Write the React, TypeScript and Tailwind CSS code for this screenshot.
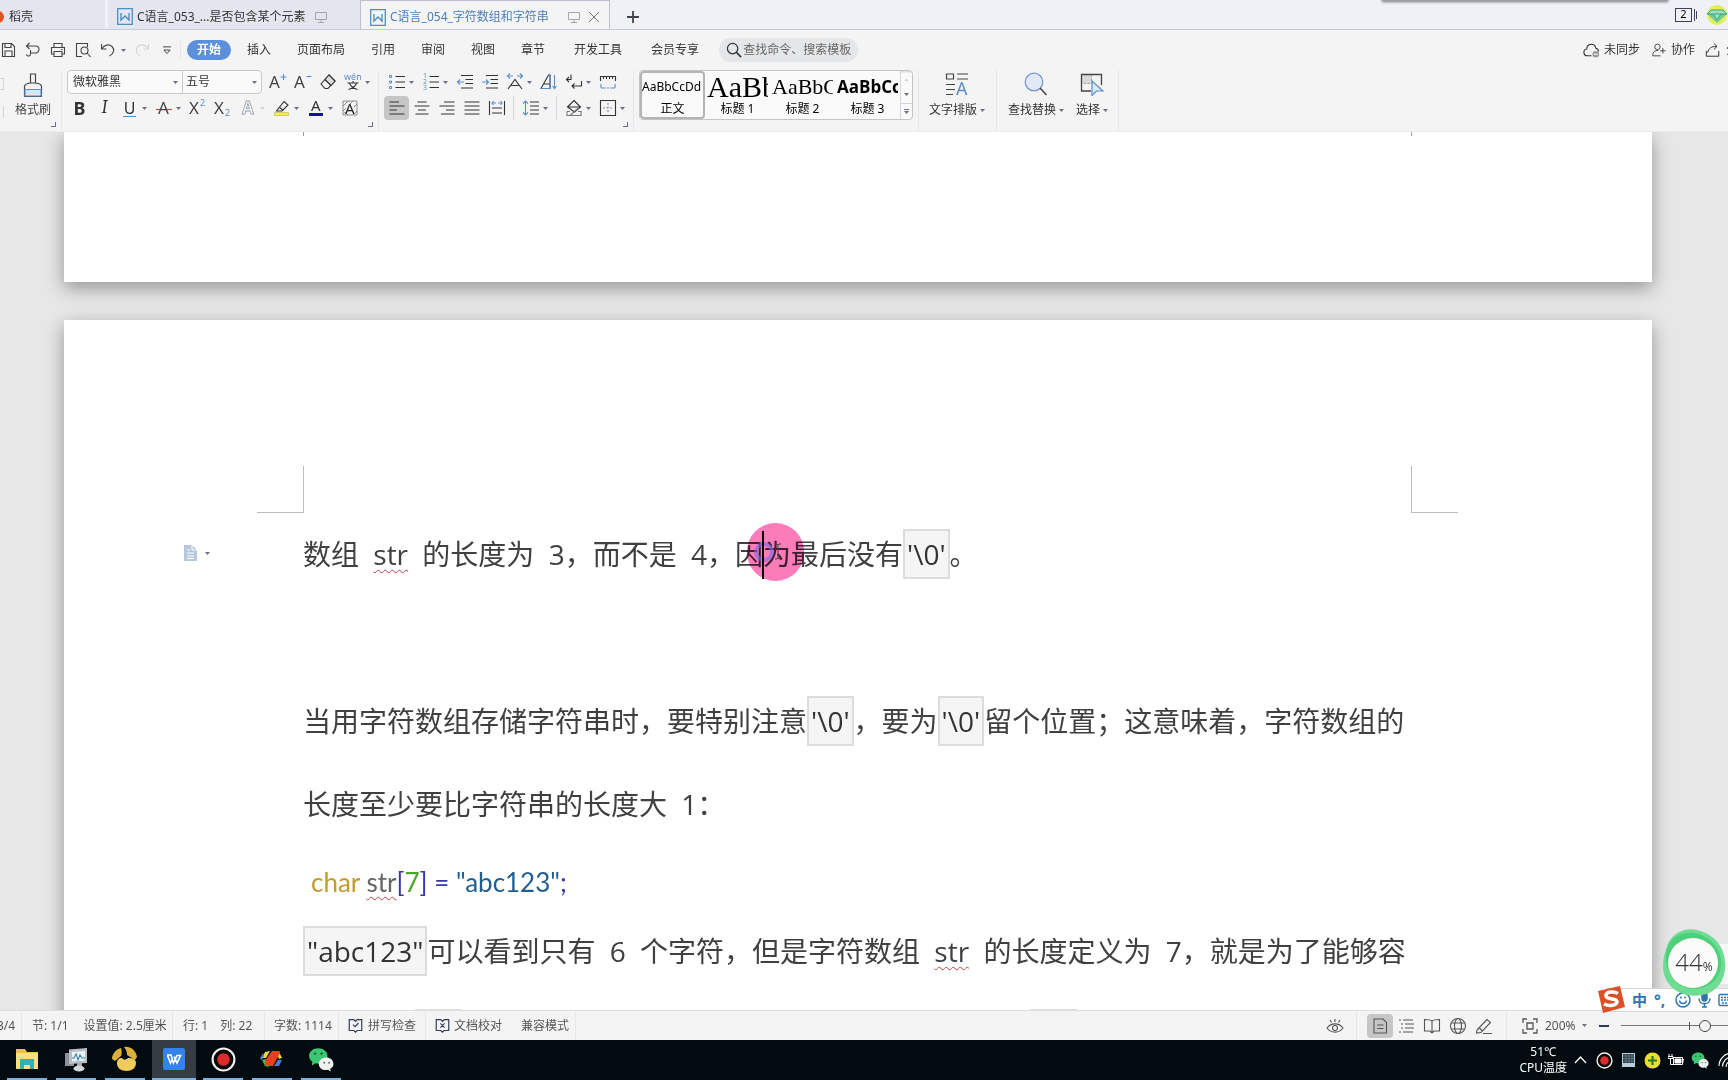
import type { ReactNode } from "react";
import clsx from "clsx";

type IconProps = { size?: number; className?: string; children: ReactNode };

function Icon({ size = 18, className, children }: IconProps) {
  return (
    <svg
      width={size}
      height={size}
      viewBox="0 0 18 18"
      fill="none"
      stroke="currentColor"
      strokeWidth="1.1"
      className={clsx("shrink-0 overflow-visible", className)}
      aria-hidden="true"
    >
      {children}
    </svg>
  );
}

function Caret({ light }: { light?: boolean }) {
  return (
    <svg width="5" height="3" viewBox="0 0 5 3" className={clsx("shrink-0", light ? "text-gray-300" : "text-gray-500")} aria-hidden="true">
      <path d="M0 0h5L2.5 3z" fill="currentColor" />
    </svg>
  );
}

const BLUE = "#5b8fc9";

const icons = {
  save: <Icon><path d="M3.5 2.5h9l3 3v10h-12zM6 2.5v4h6v-4M6 15.500v-5.500h7v5.500" /></Icon>,
  exportPdf: <Icon><path d="M2.500 5h9a3.500 3.500 0 0 1 0 7H6.500M5.500 2 2.500 5l3 3M6.500 9v3.500a2 2 0 0 1-4 1" /></Icon>,
  print: <Icon><path d="M5 6V2.500h8V6M5 13H2.500V6.500h13V13H13M5 10.500h8v5H5zM12 8.500h1.500" /></Icon>,
  preview: <Icon><path d="M8 15.500H2.500v-13h11V6" /><circle cx="10.500" cy="9.500" r="3.500" /><path d="m13 12 3.500 4" /></Icon>,
  undo: <Icon><path d="M2.500 3v5h5M2.500 8C5 4 10 2.500 13 5.500s2 7-2.500 9.500" /></Icon>,
  redo: <Icon className="text-gray-300"><path d="M15.500 3v5h-5M15.500 8C13 4 8 2.500 5 5.500s-2 7 2.500 9.500" /></Icon>,
  more: <Icon size={16}><path d="M4.500 5.500h9M5.500 9 9 13l3.500-4z" /></Icon>,
  fontUp: <Icon><text x="0" y="15" fontSize="17" fill="#444" stroke="none">A</text><path d="M14.500 1v6M11.500 4h6" stroke={BLUE} /></Icon>,
  fontDown: <Icon><text x="0" y="15" fontSize="17" fill="#444" stroke="none">A</text><path d="M12.500 3.500h5" stroke={BLUE} /></Icon>,
  eraser: <Icon><path d="m10 2 6 6-7 7.500H6L2 11z" /><path d="m6 6.500 6 6" /><path d="m10 2 6 6-4 4.500-6-6z" fill="#dcdcdc" /></Icon>,
  pinyin: <Icon><text x="0" y="7" fontSize="9" fill={BLUE} stroke="none">wén</text><path d="M3.500 10h11M9 8v2M5.500 10.500c1.500 3 4 5 8 6M12.500 10.500c-1.500 3-4 5-8 6" /></Icon>,
  bullets: <Icon><path d="M7.500 3.500H17M7.500 9H17M7.500 14.500H17" /><path d="M1.500 2.500h2v2h-2zM1.500 8h2v2h-2zM1.500 13.500h2v2h-2z" stroke={BLUE} strokeWidth="1" /></Icon>,
  numbers: <Icon><path d="M7.500 3.500H17M7.500 9H17M7.500 14.500H17" /><g fill={BLUE} stroke="none" fontSize="7"><text x="1" y="5">1</text><text x="1" y="11">2</text><text x="1" y="17">3</text></g></Icon>,
  outdent: <Icon><path d="M5 2.500h12M9.500 6.500H17M9.500 10.500H17M5 15h12" /><path d="M8 9H1.500M4 6.500 1.500 9 4 11.500" stroke={BLUE} /></Icon>,
  indent: <Icon><path d="M5 2.500h12M9.500 6.500H17M9.500 10.500H17M5 15h12" /><path d="M1 9h6.500M5 6.500 7.500 9 5 11.500" stroke={BLUE} /></Icon>,
  charScale: <Icon><path d="M2 16 9 6.500 16 16M5 12.500h8" /><path d="M7 3H1.500M4 .5 1.500 3 4 5.500M11 3h5.500M14 .5 16.500 3 14 5.500" stroke={BLUE} /></Icon>,
  sort: <Icon><path d="M1 15.500 8.500 2H10v13.500zM4 11h6" /><path d="M8.500 2H10v13.500H1M14.500 2v13.500M12.500 13l2 2.500 2-2.500" stroke={BLUE} /></Icon>,
  wrap: <Icon><path d="M6 1.500v5H1.500M4 4 1.500 6.500 4 9M16.500 8v5H7M9.500 10.500 7 13l2.500 2.500" /></Icon>,
  ruler: <Icon><path d="M1.500 8V3.500h15V8M4.500 3.500V6M7.500 3.500V6M10.500 3.500V6M13.500 3.500V6" /><path d="M2 11v4M16 11v4M4 15h3M8 15h2M11 15h3M2 15h2M14 15h2" stroke={BLUE} /></Icon>,
  strikeA: <Icon><path d="M1 10.500h16" stroke="#b5503a" /><text x="3" y="15" fontSize="17" fill="#444" stroke="none">A</text></Icon>,
  outlineA: <Icon className="text-gray-400"><text x="3" y="15" fontSize="17" fontWeight="700" strokeWidth=".8" fill="none">A</text></Icon>,
  highlighter: <Icon><path d="M3.500 12 11 2.500l4 3.500-6 6zM6.500 8.500l4 3" /><path d="M1.500 13.500h14v3h-14z" fill="#f5ec4e" stroke="#b9b040" strokeWidth=".6" /></Icon>,
  colorA: <Icon><text x="4" y="12" fontSize="15" fill="#333" stroke="none">A</text><path d="M2 14h14v3H2z" fill="#15109a" stroke="none" /></Icon>,
  boxA: <Icon><path d="M2 2h14v14H2zM2 7l5-5M2 12 5 9M12 2 9 5M16 5l-3 3M16 12l-4 4M7 16l-4-3" stroke="#777" strokeWidth=".8" /><text x="4" y="14.500" fontSize="15" fill="#222" stroke="none">A</text></Icon>,
  alignLeft: <Icon><path d="M1.500 3H11M1.500 7h15M1.500 11H9M1.500 15h15" /></Icon>,
  alignCenter: <Icon><path d="M4.500 3h9M1.500 7h15M5 11h8M2.500 15h13" /></Icon>,
  alignRight: <Icon><path d="M6 3h10.500M1.500 7h15M8 11h8.500M3 15h13.500" /></Icon>,
  justify: <Icon><path d="M1.500 3h15M1.500 7h15M1.500 11h15M1.500 15h15" /></Icon>,
  distribute: <Icon><path d="M1.500 2v14M16.500 2v14M4 9h10M4 14h10" /><path d="M8 4H4M5.500 2 4 4l1.500 2M10 4h4M12.500 2 14 4l-1.500 2" stroke={BLUE} /></Icon>,
  lineSpacing: <Icon><path d="M8 3h9M8 7h9M8 11h9M8 15h9" /><path d="M3.500 2v14M1 4.500 3.500 2 6 4.500M1 13.500 3.500 16 6 13.500" stroke={BLUE} /></Icon>,
  bucket: <Icon><path d="m9 1.500 6.500 6.500-6 5L2.500 8zM3 8h12" /><path d="M2 12.500h3M13 12.500h3v4H2v-4M5 16.500l9-8" stroke="#777" /></Icon>,
  borders: <Icon><path d="M1.500 1.500h15v15h-15z" /><path d="M9 4v10M4 9h10" stroke="#888" strokeDasharray="2 1.500" /></Icon>,
};

type Tool = { label: string; icon: ReactNode; caret?: boolean; light?: boolean; active?: boolean; divider?: boolean };

const fontTools: Tool[] = [
  { label: "增大字号", icon: icons.fontUp },
  { label: "减小字号", icon: icons.fontDown },
  { label: "清除格式", icon: icons.eraser },
  { label: "拼音指南", icon: icons.pinyin, caret: true },
];

const charTools: Tool[] = [
  { label: "加粗", icon: <b className="text-lg leading-none">B</b> },
  { label: "倾斜", icon: <i className="font-serif text-lg leading-none">I</i> },
  { label: "下划线", icon: <span className="border-b border-[#5b8fc9] px-px text-base leading-4">U</span>, caret: true },
  { label: "删除线", icon: icons.strikeA, caret: true },
  { label: "上标", icon: <Icon><text x="0" y="15" fontSize="17" fill="#444" stroke="none">X</text><text x="11" y="7" fontSize="9" fill={BLUE} stroke="none">2</text></Icon> },
  { label: "下标", icon: <Icon><text x="0" y="15" fontSize="17" fill="#444" stroke="none">X</text><text x="11" y="17" fontSize="9" fill={BLUE} stroke="none">2</text></Icon> },
  { label: "文字效果", icon: icons.outlineA, caret: true, light: true },
  { label: "突出显示", icon: icons.highlighter, caret: true },
  { label: "字体颜色", icon: icons.colorA, caret: true },
  { label: "字符底纹", icon: icons.boxA },
];

const listTools: Tool[] = [
  { label: "项目符号", icon: icons.bullets, caret: true },
  { label: "编号", icon: icons.numbers, caret: true },
  { label: "减少缩进量", icon: icons.outdent },
  { label: "增加缩进量", icon: icons.indent },
  { label: "中文版式", icon: icons.charScale, caret: true },
  { label: "排序", icon: icons.sort },
  { label: "显示标记", icon: icons.wrap, caret: true },
  { label: "制表位", icon: icons.ruler },
];

const alignTools: Tool[] = [
  { label: "左对齐", icon: icons.alignLeft, active: true },
  { label: "居中对齐", icon: icons.alignCenter },
  { label: "右对齐", icon: icons.alignRight },
  { label: "两端对齐", icon: icons.justify },
  { label: "分散对齐", icon: icons.distribute, divider: true },
  { label: "行距", icon: icons.lineSpacing, caret: true, divider: true },
  { label: "底纹颜色", icon: icons.bucket, caret: true },
  { label: "边框", icon: icons.borders, caret: true },
];

function ToolRow({ tools }: { tools: Tool[] }) {
  return (
    <div className="flex h-6 items-center">
      {tools.map((t) => (
        <div key={t.label} className="flex h-6 items-center">
          <button
            aria-label={t.label}
            className={clsx("flex h-6 items-center rounded-sm", t.active && "bg-[#c6c6c6]")}
          >
            <span className="flex w-[25px] justify-center">{t.icon}</span>
            {t.caret && <span className="flex w-[9px]"><Caret light={t.light} /></span>}
          </button>
          {t.divider && <span className="mx-1 h-6 w-px bg-gray-300" />}
        </div>
      ))}
    </div>
  );
}

function WpsBadge() {
  return (
    <svg width="16" height="17" viewBox="0 0 16 17" fill="none" stroke="#4f8fbf" aria-hidden="true" className="shrink-0">
      <path d="M.7.700h14.600v15.600H.7z" strokeWidth="1.300" />
      <path d="M4 5v7l4-4 4 4V5" strokeWidth="1.400" />
    </svg>
  );
}

function Screen() {
  return (
    <svg width="12" height="12" viewBox="0 0 12 12" fill="none" stroke="#a3a6ae" aria-hidden="true" className="shrink-0">
      <path d="M.5 1.500h11v7H.5zM6 8.500v3M3 11.500h6" />
    </svg>
  );
}

function TabBar() {
  return (
    <div className="relative flex h-[30px] shrink-0 overflow-hidden border-b border-[#c3cad9] bg-[#eff1f6] text-[#333]">
      <div className="flex w-[105px] items-center bg-[#e3e6ef] pt-1">
        <span className="-ml-2 mr-1 h-3 w-3 rounded-full bg-[#e4511f]" />
        <span className="pl-px">稻壳</span>
      </div>
      <div className="ml-[3px] flex w-[252px] items-center bg-[#e3e6ef] pl-[9px] pt-1">
        <WpsBadge />
        <span className="ml-1 w-[178px] whitespace-nowrap">C语言_053_...是否包含某个元素</span>
        <Screen />
      </div>
      <div className="flex w-[250px] items-center border border-b-0 border-[#bcc1cd] bg-[#f4f4f5] pl-[9px] pt-1 text-[#4a80b8]">
        <WpsBadge />
        <span className="ml-1 w-[178px] whitespace-nowrap">C语言_054_字符数组和字符串</span>
        <Screen />
        <button aria-label="关闭" className="ml-2">
          <svg width="12" height="12" viewBox="0 0 12 12" stroke="#777"><path d="m1 1 10 10M11 1 1 11" /></svg>
        </button>
      </div>
      <button aria-label="新建" className="ml-4 pt-1">
        <svg width="14" height="14" viewBox="0 0 14 14" stroke="#444" strokeWidth="1.800"><path d="M7 1v12M1 7h12" /></svg>
      </button>
      <div className="ml-auto flex items-center gap-2">
        <span className="flex items-center gap-px pr-px">
          <span className="mr-px flex h-[14px] w-[17px] items-center justify-center border border-[#39415c] text-[11px] text-black">2</span>
          <span className="h-3 w-px bg-[#39415c]" />
          <span className="h-2 w-px bg-[#39415c]" />
        </span>
        <svg width="22" height="22" viewBox="0 0 22 22" aria-hidden="true">
          <circle cx="11" cy="11" r="10" fill="#e3ee58" />
          <path d="M5 6h12l4 4-10 9L1 10z" fill="#6fce9b" />
          <path d="M5 6h12l4 4H1zM7 10l4 6 4-6" fill="#9be3bd" stroke="#3f9d78" />
        </svg>
      </div>
      <div className="absolute -top-1 right-[60px] h-[5px] w-[286px] bg-gray-400 shadow-[0_1px_3px_rgba(0,0,0,0.5)]" />
    </div>
  );
}

function MenuBar() {
  const quick = "flex w-[25px] justify-center text-[#444]";
  return (
    <div className="flex h-10 shrink-0 items-center overflow-hidden whitespace-nowrap text-[#333]">
      <div className="-ml-[5px] flex w-[186px] items-center border-r border-gray-200">
        <button aria-label="保存" className={quick}>{icons.save}</button>
        <button aria-label="输出" className={quick}>{icons.exportPdf}</button>
        <button aria-label="打印" className={quick}>{icons.print}</button>
        <button aria-label="打印预览" className={quick}>{icons.preview}</button>
        <button aria-label="撤销" className="flex w-[34px] items-center gap-1 pl-1 text-[#444]">{icons.undo}<Caret /></button>
        <button aria-label="恢复" className={quick}>{icons.redo}</button>
        <button aria-label="更多" className={quick}>{icons.more}</button>
      </div>
      <nav className="ml-[6px] flex items-center gap-[26px]">
        <button className="-mr-[10px] h-5 w-11 rounded-full bg-[#5c8fdc] font-bold text-white">开始</button>
        <button>插入</button>
        <button>页面布局</button>
        <button>引用</button>
        <button>审阅</button>
        <button>视图</button>
        <button>章节</button>
      </nav>
      <nav className="ml-[29px] flex items-center gap-[29px]">
        <button>开发工具</button>
        <button>会员专享</button>
      </nav>
      <label className="ml-5 flex h-6 w-[139px] items-center rounded-full bg-[#e5e6e8] pl-[7px]">
        <Icon size={17}><circle cx="7" cy="7" r="5.500" strokeWidth="1.300" /><path d="m11 11 5 5" strokeWidth="1.600" /></Icon>
        <input aria-label="搜索" placeholder="查找命令、搜索模板" className="w-[112px] bg-transparent outline-none placeholder:text-[#666]" />
      </label>
      <div className="-mr-[22px] ml-auto flex shrink-0 items-center">
        <button className="flex items-center gap-1">
          <Icon size={17}><path d="M9 14.500H5a3.500 3.500 0 0 1-1-7C4 1 12.500 1 13.500 6.500c2 .5 3 2 3 3.500" /><circle cx="13.500" cy="13" r="3.500" fill="#999" stroke="none" /><path d="M11.500 13h4" stroke="#fff" /></Icon>
          未同步
        </button>
        <button className="ml-3 flex items-center gap-[5px]">
          <Icon size={14}><circle cx="7" cy="5" r="3.500" /><path d="M11 16.500H1c0-5 2.500-7 7-7M14 6.500v7M10.500 10h7" /></Icon>
          协作
        </button>
        <button className="ml-[10px] flex items-center gap-[5px]">
          <Icon size={16}><path d="M1.500 10v6h14v-6M3 12c1-5 4-7 10-7M10 1.500 13.500 5 10 8.500" /></Icon>
          分享
        </button>
      </div>
    </div>
  );
}

function Corner() {
  return <span className="absolute bottom-1 right-[5px] h-[5px] w-[5px] border-b border-r border-gray-500" />;
}

const styles = [
  { name: "正文", className: "text-xs", sample: "AaBbCcDd" },
  { name: "标题 1", className: "font-['Liberation_Serif'] text-3xl", sample: "AaBb" },
  { name: "标题 2", className: "font-['Liberation_Serif'] text-[22px]", sample: "AaBbC" },
  { name: "标题 3", className: "font-['Open_Sans'] text-[17px] font-bold", sample: "AaBbCc" },
];

function BigButton({ label, icon }: { label: string; icon: ReactNode }) {
  return (
    <button className="flex flex-col items-center gap-1">
      <span className="flex h-7 items-center">{icon}</span>
      <span className="flex items-center gap-[3px] leading-4">{label}<Caret /></span>
    </button>
  );
}

function Ribbon() {
  return (
    <div className="flex h-[62px] shrink-0 overflow-hidden whitespace-nowrap border-b border-[#ececec] text-[#333]">
      <div className="relative w-[62px] shrink-0 border-r border-gray-200">
        <span className="absolute left-0 top-2 h-3 w-1 border border-l-0 border-gray-300" />
        <span className="absolute left-0 top-9 h-3 w-1 border-r border-gray-300" />
        <button className="ml-[15px] flex flex-col items-center text-[#444]">
          <svg width="20" height="28" viewBox="0 0 20 28" fill="none" stroke="#444" strokeWidth="1.200" aria-hidden="true">
            <path d="M7.500 13V4h5v9M1.500 26.500v-10c0-2 2-3 6-3.500h5c4 .5 6 1.500 6 3.500v10z" />
            <path d="M2 19.500h16v6.500H2z" fill="#d6e6f8" stroke={BLUE} />
          </svg>
          <span className="mt-1 leading-4">格式刷</span>
        </button>
        <Corner />
      </div>
      <div className="relative w-[317px] shrink-0 border-r border-gray-200 pl-[5px]">
        <div className="flex items-center">
          <div className="flex h-6 w-[195px] rounded border border-[#c9c9c9] bg-[#fafafa]">
            <label className="relative flex w-[115px] items-center border-r border-[#c9c9c9]">
              <select aria-label="字体" className="w-full appearance-none pl-[5px] outline-none"><option>微软雅黑</option></select>
              <span className="pointer-events-none absolute right-1"><Caret /></span>
            </label>
            <label className="relative flex flex-1 items-center">
              <select aria-label="字号" className="w-full appearance-none pl-[3px] outline-none"><option>五号</option></select>
              <span className="pointer-events-none absolute right-1"><Caret /></span>
            </label>
          </div>
          <div className="ml-[3px]"><ToolRow tools={fontTools} /></div>
        </div>
        <div className="mt-[2px]"><ToolRow tools={charTools} /></div>
        <Corner />
      </div>
      <div className="relative w-[255px] shrink-0 border-r border-gray-200 pl-[5px]">
        <ToolRow tools={listTools} />
        <div className="mt-[2px]"><ToolRow tools={alignTools} /></div>
        <Corner />
      </div>
      <div className="w-[285px] shrink-0 border-r border-gray-200 pl-[5px]">
        <div className="flex h-[50px] w-[274px] rounded border border-[#c4c4c4] bg-[#fafafa] text-black">
          {styles.map((s, i) => (
            <button
              key={s.name}
              className={clsx(
                "flex w-[65px] flex-col overflow-hidden rounded-sm border-2 text-center",
                i === 0 ? "border-[#b4b4b4]" : "border-transparent",
              )}
            >
              <span className={clsx("flex h-7 w-full items-center leading-7", s.className)}>{s.sample}</span>
              <span className="w-full leading-4">{s.name}</span>
            </button>
          ))}
          <div className="flex flex-1 flex-col divide-y divide-gray-300 border-l border-gray-300">
            <button aria-label="上一行" className="flex flex-1 rotate-180 items-center justify-center"><Caret light /></button>
            <button aria-label="下一行" className="flex flex-1 items-center justify-center"><Caret /></button>
            <button aria-label="全部样式" className="flex flex-1 flex-col items-center justify-center gap-px"><span className="h-px w-[5px] bg-gray-500" /><Caret /></button>
          </div>
        </div>
      </div>
      <div className="w-[78px] shrink-0 border-r border-gray-200 pl-[10px]">
        <BigButton
          label="文字排版"
          icon={
            <svg width="24" height="24" viewBox="0 0 24 24" fill="none" stroke="#444" strokeWidth="1.200" className="overflow-visible" aria-hidden="true">
              <path d="M1.500 2h7v5h-7zM12 2h11M12 7h11M1 12.500h9M1 17.500h9M1 22.500h7" />
              <text x="11" y="23" fontSize="18" fill={BLUE} stroke="none">A</text>
            </svg>
          }
        />
      </div>
      <div className="flex w-[122px] shrink-0 gap-[12px] border-r border-gray-200 pl-[11px]">
        <BigButton
          label="查找替换"
          icon={
            <svg width="24" height="24" viewBox="0 0 24 24" fill="none" aria-hidden="true">
              <circle cx="10" cy="10" r="8.800" fill="#e3e8f6" stroke="#6d94cf" strokeWidth="1.200" />
              <path d="m16 16 6.500 7" stroke="#444" strokeWidth="1.500" />
            </svg>
          }
        />
        <BigButton
          label="选择"
          icon={
            <svg width="24" height="24" viewBox="0 0 24 24" fill="none" stroke="#444" aria-hidden="true">
              <path d="M1.500 2.500h10v9h-10z" fill="#d9d9d9" stroke="none" />
              <path d="M11 19H1.500V2.500h20V13" strokeWidth="1.300" />
              <path d="M11.500 3v8.500H2" strokeDasharray="2 1.500" stroke="#999" />
              <path d="M12 9v14.500l4.500-4.500H23z" fill="#dbe8fa" stroke={BLUE} strokeWidth="1.200" />
            </svg>
          }
        />
      </div>
    </div>
  );
}

function Code({ children }: { children: ReactNode }) {
  return (
    <code className="border-2 border-[#dcdcdc] bg-[#f5f5f5] px-[2px] py-[4px] font-['Open_Sans','Noto_Sans_CJK_SC',sans-serif] text-[#333]">
      {children}
    </code>
  );
}

function Typo({ children }: { children: ReactNode }) {
  return <span className="underline decoration-[#c2414b] decoration-wavy decoration-1 underline-offset-4">{children}</span>;
}

function Latin({ children }: { children: ReactNode }) {
  return <span className="ml-[7px]">{children}</span>;
}

function Pointer() {
  return (
    <span className="relative">
      <span className="absolute -left-4 -top-3 h-[58px] w-[57px] rounded-full bg-[#fb7cb9] mix-blend-multiply" />
      <span className="absolute -left-[9px] top-[7px] h-5 w-5 rounded-full border-4 border-[#7a6be8]/60" />
      <span className="absolute -left-px -top-1 h-12 w-[2px] bg-black" />
      <svg className="absolute left-[11px] top-2" width="8" height="17" viewBox="0 0 8 17" fill="none" stroke="#444" aria-hidden="true">
        <path d="M1 1h2l1 1 1-1h2M4 2v13M1 16h2l1-1 1 1h2" />
      </svg>
    </span>
  );
}

function Document() {
  const page = "relative bg-white shadow-[0_6px_18px_rgba(0,0,0,0.36)]";
  return (
    <main className="min-h-0 flex-1 overflow-hidden bg-[#e7e7e7] pl-16 pr-[76px]">
      <section className={clsx(page, "h-[150px]")}>
        <span className="absolute left-[239px] top-0 h-1 w-px bg-gray-400" />
        <span className="absolute right-[240px] top-0 h-1 w-px bg-gray-400" />
      </section>
      <article className={clsx(page, "mt-[38px] whitespace-nowrap px-[239px] pb-60 pt-[193px] font-['Open_Sans','Noto_Sans_CJK_SC',sans-serif] text-[28px] leading-[83px] text-[#404040]")}>
        <span className="absolute left-[193px] top-[146px] h-[47px] w-[47px] border-b border-r border-[#bdbdbd]" />
        <span className="absolute right-[194px] top-[146px] h-[47px] w-[47px] border-b border-l border-[#bdbdbd]" />
        <div className="absolute left-[120px] top-[225px] flex items-center gap-2">
          <svg width="13" height="16" viewBox="0 0 13 16" aria-hidden="true">
            <path d="M0 0h8l5 5v11H0z" fill="#b7c7dd" />
            <path d="M8 0v5h5M3 5h3M3 8h7M3 11h7M3 13.500h7" stroke="#fff" fill="none" />
          </svg>
          <Caret />
        </div>
        <p>
          数组<Latin> <Typo>str</Typo> </Latin><Latin>的长度为</Latin><Latin> 3</Latin>，而不是<Latin> 4</Latin>，因<Pointer />为最后没有<Code>'\0'</Code>。
        </p>
        <p className="mt-[84px]">
          当用字符数组存储字符串时，要特别注意<Code>'\0'</Code>，要为<Code>'\0'</Code>留个位置；这意味着，字符数组的
          <br />
          长度至少要比字符串的长度大<Latin> 1</Latin>：
        </p>
        <pre className="pl-2 pt-2 font-['Lato',sans-serif] text-[26px] leading-[56px] text-[#1f5f92]">
          <span className="text-[#c39a2b]">char</span> <span className="text-[#666]"><Typo>str</Typo></span>
          <span className="text-[#3a35a8]">[</span><span className="text-[#4ca62c]">7</span><span className="text-[#3a35a8]">] =</span> "abc123"<span className="text-[#3a35a8]">;</span>
        </pre>
        <p>
          <Code>"abc123"</Code>可以看到只有<Latin> 6 </Latin><Latin>个字符，但是字符数组</Latin><Latin> <Typo>str</Typo> </Latin><Latin>的长度定义为</Latin><Latin> 7</Latin>，就是为了能够容
        </p>
        <div className="flex gap-[568px] pl-[112px] pt-4">
          <span className="h-[50px] w-[47px] border-2 border-[#dcdcdc] bg-[#f5f5f5]" />
          <span className="h-[50px] w-[47px] border-2 border-[#dcdcdc] bg-[#f5f5f5]" />
        </div>
      </article>
    </main>
  );
}

function StatusBar() {
  const cell = "flex h-full items-center border-r border-gray-200";
  const view = "flex h-6 w-[26px] items-center justify-center";
  return (
    <footer className="flex h-[30px] shrink-0 items-center overflow-hidden whitespace-nowrap border-t border-[#dedede] bg-[#f4f4f4] text-[#555]">
      <div className={cell}><span className="-ml-[3px] w-6">3/4</span></div>
      <div className={clsx(cell, "w-[151px] gap-[15px] pl-[10px]")}><span>节: 1/1</span><span>设置值: 2.5厘米</span></div>
      <div className={clsx(cell, "w-[92px] gap-3 pl-[10px]")}><span>行: 1</span><span>列: 22</span></div>
      <div className={clsx(cell, "w-[74px] pl-[9px]")}>字数: 1114</div>
      <button className={clsx(cell, "w-[87px] gap-[5px] pl-[9px]")}>
        <Icon size={15} className="text-[#333a55]"><path d="M1.500 2H7l2 2 2-2h5.500v13H11l-2 2-2-2H1.500zM6 8l2.500 2.500L12.500 6" strokeWidth="1.400" /></Icon>
        拼写检查
      </button>
      <div className={clsx(cell, "w-[150px] gap-[19px] pl-[9px]")}>
        <button className="flex items-center gap-1">
          <Icon size={15} className="text-[#333a55]"><path d="M1.500 2H7l2 2 2-2h5.500v13H11l-2 2-2-2H1.500zM6.500 6.500l5 5M11.500 6.500l-5 5" strokeWidth="1.400" /></Icon>
          文档校对
        </button>
        <span>兼容模式</span>
      </div>
      <div className="ml-auto flex h-full items-center text-[#555]">
        <button aria-label="护眼模式" className={clsx(cell, "w-[35px] pl-1")}>
          <Icon><path d="M1 11c4-5.500 12-5.500 16 0-4 5.500-12 5.500-16 0zM9 2v3M4 3l1.500 2.500M14 3l-1.500 2.500" /><circle cx="9" cy="11" r="2.500" /></Icon>
        </button>
        <div className={clsx(cell, "w-[150px] pl-[10px]")}>
          <button aria-label="页面视图" className={clsx(view, "rounded-sm bg-[#c6c6c6]")}><Icon><path d="M3 2h9l3.500 3.500V16H3zM6 8h6.500M6 11.500h6.500" /></Icon></button>
          <button aria-label="大纲" className={view}><Icon><path d="M2 3h2M6 3h10M4 7h2M8 7h9M4 11h2M8 11h9M2 15h2M6 15h10" /></Icon></button>
          <button aria-label="阅读版式" className={view}><Icon><path d="M9 4v12M9 4C7 2.500 4 2.500 1.500 2.500V14H7l2 2 2-2h5.500V2.500C14 2.500 11 2.500 9 4z" /></Icon></button>
          <button aria-label="Web版式" className={view}><Icon><circle cx="9" cy="9" r="7.500" /><ellipse cx="9" cy="9" rx="3.500" ry="7.500" /><path d="M2.500 6h13M2.500 12h13" /></Icon></button>
          <button aria-label="写作模式" className={view}><Icon><path d="M2 13 12 2.500l3.500 3L6 15.500 1.500 16zM4 10.500l3.500 3.500M8 16.500h9" /></Icon></button>
        </div>
        <button aria-label="最佳显示比例" className="ml-[14px]"><Icon><path d="M2 6V2h4M12 2h4v4M16 12v4h-4M6 16H2v-4M6 6h6v6H6z" strokeWidth="1.300" /></Icon></button>
        <button className="ml-[6px] flex w-[54px] items-center gap-[6px]">200%<Caret /></button>
        <button aria-label="缩小" className="h-[2px] w-[10px] bg-[#333a55]" />
        <div className="relative ml-3 flex h-full w-[107px] items-center overflow-hidden">
          <span className="absolute left-[68px] h-2 w-px bg-[#555]" />
          <input
            type="range"
            aria-label="显示比例"
            defaultValue={50}
            className="h-px w-[168px] shrink-0 appearance-none bg-[#777] [&::-webkit-slider-thumb]:h-3 [&::-webkit-slider-thumb]:w-3 [&::-webkit-slider-thumb]:appearance-none [&::-webkit-slider-thumb]:rounded-full [&::-webkit-slider-thumb]:border [&::-webkit-slider-thumb]:border-[#444] [&::-webkit-slider-thumb]:bg-[#f4f4f4]"
          />
        </div>
      </div>
    </footer>
  );
}

function Wechat({ size }: { size: number }) {
  return (
    <svg width={size} height={size} viewBox="0 0 24 24" aria-hidden="true">
      <path d="M9.500 2C4.500 2 1 5.200 1 9c0 2.300 1 4 3 5.500L3.500 18l3.500-2c6 1.500 11-2 11-7 0-4-4-7-8.500-7z" fill="#3cc773" />
      <path d="M17 10.500c-4 0-7 2.500-7 6 0 4 4 6.500 8.500 5.500l2.500 1.500-.5-2.500c2-1.200 3-2.700 3-4.500 0-3.500-3-6-6.500-6z" fill="#eef3ef" />
      <circle cx="6.500" cy="7" r="1.100" fill="#185c33" /><circle cx="12.500" cy="7" r="1.100" fill="#185c33" />
      <circle cx="15" cy="15.500" r=".9" fill="#667" /><circle cx="19.500" cy="15.500" r=".9" fill="#667" />
    </svg>
  );
}

function Record({ size }: { size: number }) {
  return (
    <svg width={size} height={size} viewBox="0 0 24 24" aria-hidden="true">
      <circle cx="12" cy="12" r="10.500" fill="#100808" stroke="#f2f2f2" strokeWidth="2" />
      <circle cx="12" cy="12" r="6" fill="#dd2b2b" />
    </svg>
  );
}

const apps = [
  {
    name: "文件资源管理器",
    icon: (
      <svg width="24" height="24" viewBox="0 0 24 24" aria-hidden="true">
        <path d="M1 2h9l2 3h11v17H1z" fill="#e9bf52" />
        <path d="M1 6h22v16H1z" fill="#fbdd86" />
        <path d="M5 12h14v10h-4v-4H9v4H5z" fill="#35aebb" />
      </svg>
    ),
  },
  {
    name: "系统监视器",
    icon: (
      <svg width="26" height="26" viewBox="0 0 26 26" aria-hidden="true">
        <path d="M2 7h9v13H2z" fill="#8d9398" />
        <path d="M6 3.500 24 2v15L6 18z" fill="#b9bfc4" />
        <path d="M9 6 22 5v9.500L9 15.500z" fill="#e9f3fb" />
        <path d="M9 12h2l2-4 2 6 2-5 2 3h3" fill="none" stroke="#3a83bd" strokeWidth="1.100" />
        <path d="M14 17h5v4h-5z" fill="#a6abb0" />
        <ellipse cx="16" cy="22.500" rx="5.500" ry="3" fill="#d5d8db" />
      </svg>
    ),
  },
  {
    name: "Navicat",
    icon: (
      <svg width="26" height="26" viewBox="0 0 26 26" aria-hidden="true">
        <path d="M0 13C0 7 5 3 9 2c1 3 1 6 0 8l-6 5zM12 1c6-1 12 3 13 10l-2 3-8-5c0-3-1-6-3-8z" fill="#dcaf38" />
        <path d="M5 17c0-3 2-5 5-5 1.500 2 3.500 2.500 6 0 4 0 8 1 8 5 0 5-4 8-9.500 8S5 22 5 17z" fill="#f0cc5c" />
      </svg>
    ),
  },
  {
    name: "WPS Office",
    active: true,
    icon: (
      <svg width="22" height="22" viewBox="0 0 22 22" aria-hidden="true">
        <rect width="22" height="22" rx="2" fill="#3482ea" />
        <path d="M4 7h4l2.500 8L14 7.500h3.500L14 15 11 8.500M4.500 7.500 7.500 15l2-4" fill="none" stroke="#fff" strokeWidth="1.600" />
      </svg>
    ),
  },
  { name: "录屏", icon: <Record size={25} /> },
  {
    name: "风车",
    icon: (
      <svg width="26" height="20" viewBox="0 0 26 20" aria-hidden="true">
        <path d="M3 9 6 3l5-1-4 7z" fill="#f0d33c" />
        <path d="M3 11l3 6 4 1-3-8z" fill="#55b047" />
        <path d="M23 9l-3-6-3 0 3 7z" fill="#e8d83a" />
        <path d="M23 11l-3 6h-5l4-6z" fill="#4a7fd8" />
        <path d="M1 9.500l3-5.500 1 3-2 4z" fill="#4a7fd8" />
        <path d="M8 9 13 2h7c2 1 1 3 0 4l-6 11H8c-3-1-2-4 0-8z" fill="#e8401f" />
      </svg>
    ),
  },
  { name: "微信", icon: <Wechat size={26} /> },
];

function Taskbar() {
  return (
    <div className="flex h-10 shrink-0 justify-between overflow-hidden bg-[#020b0f] text-white">
      <div className="flex gap-[5px] pl-[5px]">
        {apps.map((a) => (
          <button
            key={a.name}
            aria-label={a.name}
            className={clsx("flex w-11 flex-col items-center justify-between", a.active && "bg-[#363d42]")}
          >
            <span className="flex h-[38px] items-center">{a.icon}</span>
            <span className={clsx("h-[2px] bg-[#7fb0dd]", a.active ? "w-full" : "w-10")} />
          </button>
        ))}
      </div>
      <div className="flex items-center">
        <div className="text-center leading-4">
          <p>51℃</p>
          <p>CPU温度</p>
        </div>
        <button aria-label="显示隐藏的图标" className="ml-[6px] flex w-[14px] justify-center">
          <svg width="13" height="8" viewBox="0 0 13 8" fill="none" stroke="#fff" strokeWidth="1.300"><path d="m1 7 5.500-6L12 7" /></svg>
        </button>
        <div className="-mr-2 ml-[5px] flex items-center">
          <span className="flex w-6 justify-center"><Record size={17} /></span>
          <span className="flex w-6 justify-center">
            <svg width="13" height="14" viewBox="0 0 13 14"><path d="M0 0h13v14H0z" fill="#b9cddb" /><path d="M1 1h11v9H1z" fill="#2c3b47" /><path d="M1 3h11M1 5.500h11M1 8h11M4 1v9M7 1v9M10 1v9" stroke="#7b8f9e" strokeWidth=".6" /></svg>
          </span>
          <span className="flex w-6 justify-center">
            <svg width="17" height="17" viewBox="0 0 17 17"><circle cx="8.500" cy="8.500" r="8" fill="#ecdf2b" /><path d="M8.500 4v9M4 8.500h9" stroke="#2b7a2b" strokeWidth="2.200" /></svg>
          </span>
          <span className="flex w-6 justify-center">
            <svg width="16" height="14" viewBox="0 0 16 14" fill="none" stroke="#fff"><path d="M5.500 4.500h9v7h-9zM14.500 6.500h1.500v3" /><path d="M7 6h6v4H7z" fill="#fff" /><path d="M1 1v2M4 1v2M0 3.500h5v2H0zM2.500 6v5.500h3" /></svg>
          </span>
          <span className="flex w-6 justify-center"><Wechat size={18} /></span>
          <span className="flex w-6 pl-[6px]">
            <svg width="16" height="16" viewBox="0 0 16 16" fill="none" stroke="#fff" strokeWidth="1.200"><path d="M1 14C1 7 7 1 14 1M4.500 14.500c0-5 4-9.500 9.500-9.500M8 15c0-3.500 2.500-6 6-6" /></svg>
          </span>
        </div>
      </div>
    </div>
  );
}

function Floaters() {
  return (
    <>
      <div className="absolute bottom-[96px] right-0 h-10 w-5 bg-[#f7f7f7]" />
      <div className="absolute bottom-[68px] right-0 flex h-6 w-[122px] items-center border-y border-gray-300 bg-white">
        <svg className="absolute -left-[9px]" width="30" height="28" viewBox="0 0 30 28" aria-hidden="true">
          <path d="m1 5 22-5 5 21-22 6z" fill="#dd4f27" />
          <path d="M21 7.500c-4-2.500-12-2-12 2 0 5 11 2 11 6s-8 5-13 2.500" fill="none" stroke="#fff" strokeWidth="3.500" />
        </svg>
        <div className="ml-[26px] flex items-center gap-[7px] whitespace-nowrap text-[#2f74b0]">
          <b className="w-[15px] text-[15px] leading-none">中</b>
          <b className="w-[14px] text-base leading-none">°,</b>
          <svg width="16" height="16" viewBox="0 0 16 16" fill="none" stroke="currentColor" strokeWidth="1.500" aria-hidden="true">
            <circle cx="8" cy="8" r="7" /><path d="M4.500 8.500c.5 4 6.500 4 7 0M6 4.500v2M10 4.500v2" />
          </svg>
          <svg width="13" height="16" viewBox="0 0 13 16" fill="none" stroke="currentColor" strokeWidth="1.500" aria-hidden="true">
            <rect x="4" y="1" width="5" height="8" rx="2.500" fill="currentColor" /><path d="M1 6.500c0 7 11 7 11 0M6.500 12v3M4 15h5" />
          </svg>
        </div>
        <svg className="absolute -right-1" width="14" height="14" viewBox="0 0 14 14" fill="none" stroke="#2f74b0" strokeWidth="1.400" aria-hidden="true">
          <rect x="1" y="1.500" width="12" height="11" rx="1" /><path d="M3 4.500h8M3 7h8M4 10h6" strokeDasharray="2 1" />
        </svg>
      </div>
      <div className="absolute bottom-[85px] right-px flex h-[66px] w-[66px] items-center justify-center">
        <svg className="absolute inset-0" width="66" height="68" viewBox="0 0 66 68" aria-hidden="true">
          <path d="M5 20C9 4 24-2 36 1c12 3 22 10 26 22 5 15 2 32-12 40-14 7-34 4-42-8C0 45 1 32 5 20z" fill="#6fdc93" />
          <path d="M6 20C11 2 32 0 46 9c14 9 19 27 9 41-10 12-30 13-40 3C6 44 3 32 6 20z" fill="#45cd74" opacity=".8" />
          <circle cx="32" cy="34" r="25" fill="#fbfbfb" />
        </svg>
        <span className="relative font-['Open_Sans'] text-2xl font-light text-[#333]">44<span className="text-xs font-normal">%</span></span>
      </div>
    </>
  );
}

export default function App() {
  return (
    <div className="relative flex h-screen flex-col overflow-hidden bg-[#f4f4f4] font-['Noto_Sans','Noto_Sans_CJK_SC',sans-serif] text-xs">
      <TabBar />
      <MenuBar />
      <Ribbon />
      <Document />
      <StatusBar />
      <Taskbar />
      <Floaters />
    </div>
  );
}
